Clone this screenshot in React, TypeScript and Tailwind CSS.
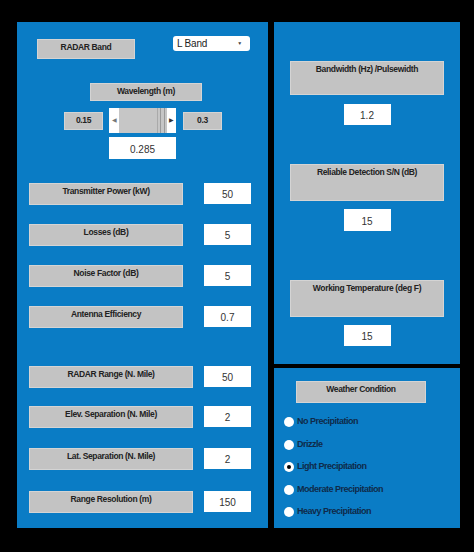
import React from 'react';

const font = { fontFamily: '"Liberation Sans", Arial, sans-serif' };

function Label({ text, className }: { text: string; className: string }) {
  return (
    <div className={'bg-[#c3c3c3] border border-[#d4d4d4] text-center text-[8.5px] font-bold text-[#222] leading-none pt-[3px] tracking-[-0.35px] ' + className}>
      {text}
    </div>
  );
}

function Field({ value, className }: { value: string; className: string }) {
  return (
    <div className={'bg-white flex items-center justify-center text-[10px] text-[#333] pt-[2px] ' + className}>
      {value}
    </div>
  );
}

function ParamRow({ label, value, labelW, top }: { label: string; value: string; labelW: string; top: string }) {
  return (
    <div className={'flex items-start ' + top}>
      <Label text={label} className={'h-[22px] ml-[12px] ' + labelW} />
      <Field value={value} className="h-[21px] w-[47px] ml-auto mr-[17px]" />
    </div>
  );
}

const weather = ['No Precipitation', 'Drizzle', 'Light Precipitation', 'Moderate Precipitation', 'Heavy Precipitation'];

export default function App() {
  return (
    <div className="w-[474px] h-[552px] bg-black flex pt-[22px] pl-[17px]" style={font}>
      <div className="w-[251px] h-[506px] bg-[#0a7cc5] flex flex-col">
        <div className="flex items-start mt-[14px]">
          <Label text="RADAR Band" className="w-[98px] h-[20px] ml-[20px] mt-[3px]" />
          <div className="w-[77px] h-[15px] ml-[38px] bg-white rounded-[3px] flex items-center pl-[4px] pr-[8px] text-[10px] text-[#222] tracking-[-0.2px]">
            <span>L Band</span>
            <span className="ml-auto text-[5px] text-[#444]">▼</span>
          </div>
        </div>

        <Label text="Wavelength (m)" className="w-[112px] h-[18px] ml-[73px] mt-[24px]" />

        <div className="flex items-center mt-[7px]">
          <Label text="0.15" className="w-[39px] h-[18px] ml-[47px]" />
          <div className="w-[67px] h-[25px] ml-[6px] bg-white flex">
            <div className="w-[10px] flex items-center justify-center text-[6px] text-[#777]">◀</div>
            <div className="w-[48px] bg-[#c6c6c6] flex justify-end">
              <div className="w-[10px] h-full flex justify-around border-l border-[#aaa]">
                <div className="w-px bg-[#999]" />
                <div className="w-px bg-[#999]" />
              </div>
            </div>
            <div className="w-[9px] flex items-center justify-center text-[6px] text-[#333]">▶</div>
          </div>
          <Label text="0.3" className="w-[39px] h-[18px] ml-[7px]" />
        </div>

        <Field value="0.285" className="w-[67px] h-[22px] ml-[92px] mt-[4px]" />

        <ParamRow label="Transmitter Power (kW)" value="50" labelW="w-[154px]" top="mt-[24px]" />
        <ParamRow label="Losses (dB)" value="5" labelW="w-[154px]" top="mt-[19px]" />
        <ParamRow label="Noise Factor (dB)" value="5" labelW="w-[154px]" top="mt-[19px]" />
        <ParamRow label="Antenna Efficiency" value="0.7" labelW="w-[154px]" top="mt-[19px]" />
        <ParamRow label="RADAR Range (N. Mile)" value="50" labelW="w-[164px]" top="mt-[38px]" />
        <ParamRow label="Elev. Separation (N. Mile)" value="2" labelW="w-[164px]" top="mt-[18px]" />
        <ParamRow label="Lat. Separation (N. Mile)" value="2" labelW="w-[164px]" top="mt-[20px]" />
        <ParamRow label="Range Resolution (m)" value="150" labelW="w-[164px]" top="mt-[21px]" />
      </div>

      <div className="w-[186px] ml-[6px] flex flex-col">
        <div className="h-[342px] bg-[#0a7cc5] flex flex-col items-center">
          <Label text="Bandwidth (Hz) /Pulsewidth" className="w-[154px] h-[34px] mt-[39px]" />
          <Field value="1.2" className="w-[47px] h-[21px] mt-[9px]" />
          <Label text="Reliable Detection S/N (dB)" className="w-[154px] h-[37px] mt-[39px]" />
          <Field value="15" className="w-[47px] h-[22px] mt-[8px]" />
          <Label text="Working Temperature (deg F)" className="w-[154px] h-[37px] mt-[49px]" />
          <Field value="15" className="w-[47px] h-[21px] mt-[8px]" />
        </div>
        <div className="h-[160px] mt-[4px] bg-[#0a7cc5] flex flex-col">
          <Label text="Weather Condition" className="w-[130px] h-[22px] ml-[22px] mt-[13px]" />
          <div className="flex flex-col mt-[14px] ml-[10px] gap-[12.5px]">
            {weather.map((w, i) => (
              <div key={w} className="flex items-center h-[10px]">
                <div className="w-[10px] h-[10px] rounded-full bg-white flex items-center justify-center">
                  {i === 2 && <div className="w-[4px] h-[4px] rounded-full bg-black" />}
                </div>
                <span className="ml-[3px] text-[9px] font-bold text-[#0f2a4a] tracking-[-0.5px]">{w}</span>
              </div>
            ))}
          </div>
        </div>
      </div>
    </div>
  );
}
